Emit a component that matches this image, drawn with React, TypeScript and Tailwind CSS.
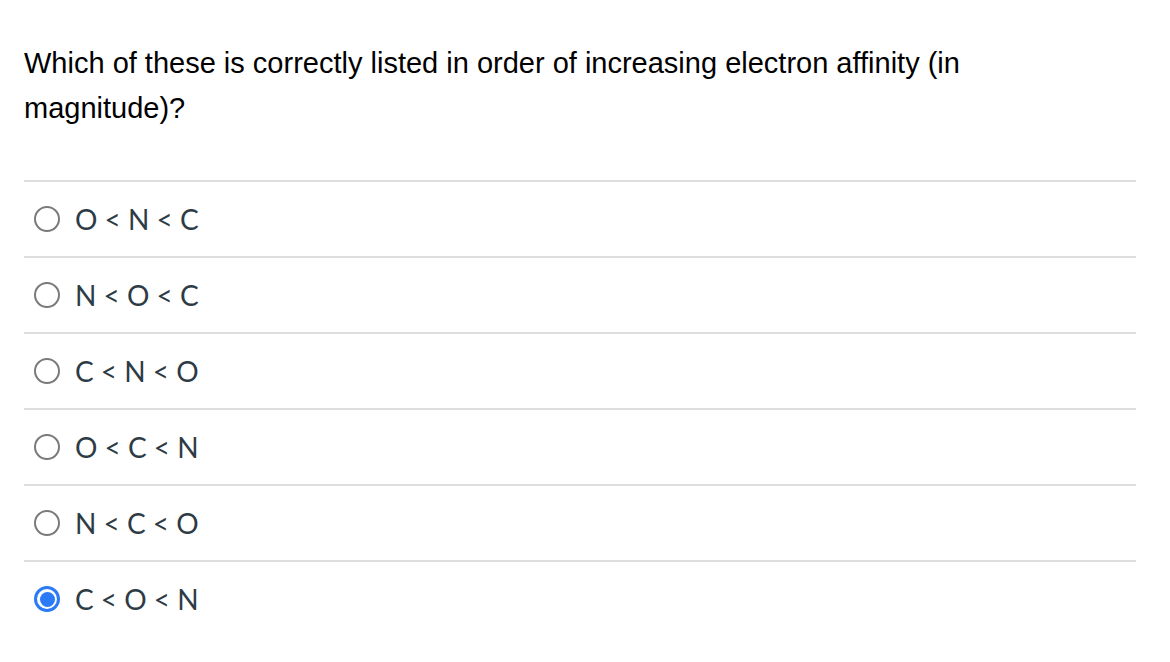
import React from "react";

const options = [
  { label: "O < N < C", checked: false },
  { label: "N < O < C", checked: false },
  { label: "C < N < O", checked: false },
  { label: "O < C < N", checked: false },
  { label: "N < C < O", checked: false },
  { label: "C < O < N", checked: true },
];

function Radio({ checked }: { checked: boolean }) {
  if (checked) {
    return (
      <span className="w-[26px] h-[26px] rounded-full border-[3px] border-[#2b7af6] flex items-center justify-center shrink-0">
        <span className="w-[15px] h-[15px] rounded-full bg-[#2b7af6]" />
      </span>
    );
  }
  return <span className="w-[26px] h-[26px] rounded-full border-2 border-[#7a7a7a] shrink-0" />;
}

export default function App() {
  return (
    <div className="w-[1170px] h-[662px] bg-white px-[24px] pt-[41px]">
      <div className="w-[1112px]">
        <p className="w-[1050px] text-[29px] leading-[45px] text-black font-['Liberation_Sans',Arial,sans-serif]">
          Which of these is correctly listed in order of increasing electron affinity (in magnitude)?
        </p>
        <div className="mt-[49px]">
          {options.map((o) => (
            <div key={o.label} className="h-[76px] border-t-2 border-[#dedede] flex items-center pl-[10px] gap-[15px]">
              <Radio checked={o.checked} />
              <span className="text-[28px] text-[#2d3b45] font-['Lato',sans-serif] whitespace-pre">
                {o.label}
              </span>
            </div>
          ))}
        </div>
      </div>
    </div>
  );
}
